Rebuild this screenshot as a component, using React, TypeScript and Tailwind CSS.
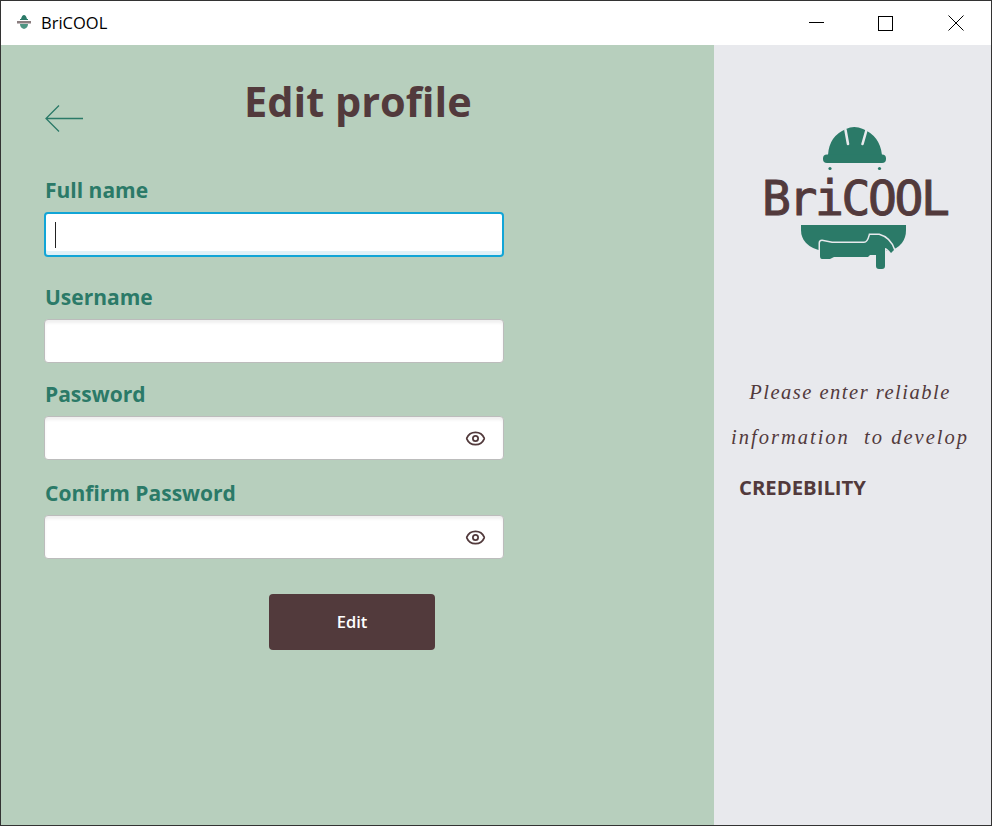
import { Eye } from 'lucide-react'

function Field({ label, focused, eye, className }: { label: string; focused?: boolean; eye?: boolean; className?: string }) {
  return (
    <div className={className}>
      <div className="text-[21px] leading-[28px] font-bold text-[#2b7a68]">{label}</div>
      <div
        className={
          focused
            ? 'mt-[8px] -ml-px w-[460px] h-[45px] rounded-[4px] border-2 border-[#12a5d6] bg-white shadow-[inset_0_-4px_0_#e0f1f8] flex items-center pl-[9px]'
            : 'mt-[8px] -ml-px w-[460px] h-[44px] rounded-[4px] border border-[#bcbcbc] bg-white shadow-[inset_0_3px_3px_#f0f0f0] flex items-center justify-end pr-[17px]'
        }
      >
        {focused && <div className="w-px h-[26px] bg-[#222]" />}
        {eye && <Eye className="w-[21px] h-[21px] text-[#523a3c]" strokeWidth={2} />}
      </div>
    </div>
  )
}

function Logo() {
  return (
    <svg width="190" height="146" viewBox="0 0 190 146" className="block">
      {/* helmet */}
      <path d="M66 28 Q67 9 84 2 Q92 -2 101 2 Q118 9 120 28 Z" fill="#2b7a68" />
      <rect x="61" y="27.5" width="63" height="8.5" rx="4" fill="#2b7a68" />
      <path d="M83.5 3 L86 17 M104.5 3 L100.5 17" stroke="#e8e9ed" strokeWidth="2.6" strokeLinecap="round" />
      <circle cx="68" cy="41.5" r="1.6" fill="#2b7a68" />
      <circle cx="117.5" cy="41.5" r="1.6" fill="#2b7a68" />
      <text x="0" y="88" fontFamily="'DejaVu Sans Mono', monospace" fontSize="48" letterSpacing="-2.4" fill="#523a3c" stroke="#523a3c" strokeWidth="1">
        BriCOOL
      </text>
      {/* bowl */}
      <path d="M39 98 H144 V103 Q144 119 127 124 H60 Q39 119 39 103 Z" fill="#2b7a68" />
      {/* hammer */}
      <path
        d="M58 116 Q58 114 60 114 L70 116 H102 Q106 116 108 108 H117 Q128 111 132 123 L129 126 Q125 121 123 121 V139 Q123 142 120 142 H117 Q114 142 114 139 V128 H108 L106 130 H72 L68 132 H60 Q58 132 58 129 Z"
        fill="#2b7a68"
        stroke="#e8e9ed"
        strokeWidth="3"
        paintOrder="stroke"
      />
    </svg>
  )
}

export default function App() {
  return (
    <div className="w-[992px] h-[826px] border border-[#333] flex flex-col overflow-hidden bg-white font-['Open_Sans',sans-serif]">
      <header className="h-[44px] shrink-0 bg-white flex items-center">
        <svg width="16" height="16" viewBox="0 0 16 16" className="ml-[15px] mt-[-2px]">
          <path d="M5 5 q1 -4 3 -4 q2 0 3 4 h1 v1 h-8 v-1z" fill="#2b7a68" />
          <rect x="1" y="7" width="14" height="2.5" fill="#8a7d7f" />
          <path d="M4 10 h8 q0 4 -4 5 q-4 -1 -4 -5z" fill="#4e9583" />
        </svg>
        <span className="ml-[9px] text-[16.5px] text-black">BriCOOL</span>
        <div className="ml-auto flex items-center h-full">
          <div className="w-[71px] flex justify-center"><div className="ml-[6px] w-[15px] h-px bg-black mt-[-1px]" /></div>
          <div className="w-[71px] flex justify-center"><div className="ml-[2px] w-[15px] h-[15px] border border-black" /></div>
          <div className="w-[71px] flex justify-center">
            <svg width="16" height="16" viewBox="0 0 16 16"><path d="M0.5 0.5 L15.5 15.5 M15.5 0.5 L0.5 15.5" stroke="#000" strokeWidth="1" /></svg>
          </div>
        </div>
      </header>
      <div className="flex-1 flex min-h-0">
        <main className="w-[713px] bg-[#b7cfbd] pl-[44px]">
          <div className="h-[131px] flex items-start">
            <svg width="40" height="30" viewBox="0 0 40 30" className="mt-[59px]">
              <path d="M38 14.5 H1 M14 1.5 L1 14.5 L14 27.5" fill="none" stroke="#2b7a68" strokeWidth="1.3" />
            </svg>
            <h1 className="ml-[159px] mt-[28px] text-[41.5px] leading-[56px] font-bold text-[#523a3c] whitespace-nowrap">Edit profile</h1>
          </div>
          <Field label="Full name" focused />
          <Field label="Username" className="mt-[26px]" />
          <Field label="Password" eye className="mt-[17px]" />
          <Field label="Confirm Password" eye className="mt-[19px]" />
          <button className="block mt-[35px] ml-[224px] w-[166px] h-[56px] rounded-[4px] bg-[#523a3c] text-[16.5px] font-semibold text-white">Edit</button>
        </main>
        <aside className="flex-1 bg-[#e8e9ed] flex flex-col">
          <div className="mt-[82px] ml-[48px]">
            <Logo />
          </div>
          <div className="mt-[97px] pr-[5px] font-['Liberation_Serif',serif] italic text-[20.5px] text-[#523a3c] text-center leading-[45px] whitespace-pre">
            <div className="tracking-[1.5px]">Please enter reliable</div>
            <div className="tracking-[2px]">information  to develop</div>
          </div>
          <div className="mt-[13px] ml-[25px] text-[20.3px] leading-[28px] font-bold text-[#523a3c]">CREDEBILITY</div>
        </aside>
      </div>
    </div>
  )
}
